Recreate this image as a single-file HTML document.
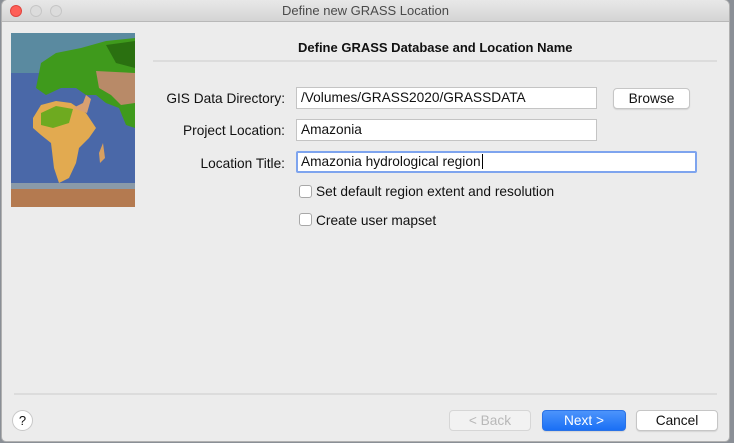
<!DOCTYPE html>
<html><head><style>
*{margin:0;padding:0;box-sizing:border-box}
body{width:734px;height:443px;background:#8a8f96;font-family:"Liberation Sans",sans-serif;font-size:13.7px;color:#111;position:relative;overflow:hidden}
.win{position:absolute;left:2px;top:0;width:727px;height:441px;background:#ececec;border-radius:6px 6px 4px 4px;overflow:hidden;box-shadow:0 0 0 1px #b0b0b0}
.title{position:absolute;left:0;top:0;width:100%;height:22px;background:linear-gradient(#e8e8e8,#d4d4d4);border-bottom:1px solid #b8b8b8;text-align:center;line-height:22px;color:#4a4a4a;font-size:13px}
.dot{position:absolute;top:5px;width:12px;height:12px;border-radius:50%}
.a{position:absolute}
.lbl{position:absolute;text-align:right;width:200px}
.inp{position:absolute;background:#fff;border:1px solid #c4c4c4;height:22px;line-height:20px;padding-left:4px}
.btn{position:absolute;background:#fff;border:1px solid #c6c6c6;border-radius:4px;text-align:center;box-shadow:0 1px 1px rgba(0,0,0,.1)}
.cb{position:absolute;width:13px;height:13px;border:1px solid #a8a8a8;border-radius:3px;background:#fff}
</style></head><body>
<div class="win">
<div class="title">Define new GRASS Location</div>
<div class="dot" style="left:8px;background:#fe5f57;border:1px solid #e0443e"></div>
<div class="dot" style="left:28px;background:#dcdcdc;border:1px solid #c6c6c6"></div>
<div class="dot" style="left:48px;background:#dcdcdc;border:1px solid #c6c6c6"></div>
<svg class="a" style="left:9px;top:33px" width="124" height="174" viewBox="0 0 124 174">
<rect width="124" height="174" fill="#4a68a8"/>
<rect y="0" width="124" height="40" fill="#5a8aa0"/>
<path d="M30 30 L45 20 L70 15 L95 8 L124 5 L124 95 L115 92 L108 75 L95 70 L85 62 L75 62 L65 55 L50 55 L35 62 L25 55 Z" fill="#3f9a1c"/>
<path d="M95 12 L124 8 L124 35 L105 30Z" fill="#2a7010"/>
<path d="M85 38 L124 40 L124 70 L110 72 L100 62 L88 55Z" fill="#b88a68"/>
<path d="M22 85 L30 72 L45 68 L60 70 L75 80 L85 95 L78 105 L68 115 L65 130 L58 145 L48 150 L43 135 L40 110 L30 102 L22 95Z" fill="#e2aa50"/>
<path d="M30 80 L45 73 L62 76 L58 90 L42 95 L30 92Z" fill="#6eaa20"/>
<path d="M62 75 L72 70 L75 62 L80 66 L76 80Z" fill="#d8a070"/>
<path d="M88 120 L92 110 L94 125 L89 130Z" fill="#d8a060"/>
<rect y="155" width="124" height="19" fill="#b47a50"/>
<rect y="150" width="124" height="6" fill="#8a9aa8"/>
</svg>
<div class="a" style="left:296px;top:40px;font-weight:bold;font-size:13px">Define GRASS Database and Location Name</div>
<div class="a" style="left:151px;top:60px;width:564px;height:2px;background:#dcdcdc"></div>
<div class="lbl" style="left:83px;top:91px">GIS Data Directory:</div>
<div class="inp" style="left:294px;top:87px;width:301px">/Volumes/GRASS2020/GRASSDATA</div>
<div class="btn" style="left:611px;top:88px;width:77px;height:21px;line-height:19px">Browse</div>
<div class="lbl" style="left:83px;top:123px">Project Location:</div>
<div class="inp" style="left:294px;top:119px;width:301px">Amazonia</div>
<div class="lbl" style="left:83px;top:156px">Location Title:</div>
<div class="inp" style="left:294px;top:151px;width:401px;border:2px solid #7ea4ee;border-radius:2px;padding-left:3px;line-height:18px">Amazonia hydrological region<span style="border-left:1px solid #000;margin-left:1px"></span></div>
<div class="cb" style="left:297px;top:185px"></div>
<div class="a" style="left:314px;top:184px">Set default region extent and resolution</div>
<div class="cb" style="left:297px;top:213px"></div>
<div class="a" style="left:314px;top:213px">Create user mapset</div>
<div class="a" style="left:12px;top:393px;width:703px;height:2px;background:#dcdcdc"></div>
<div class="a" style="left:10px;top:410px;width:21px;height:21px;border-radius:50%;background:#fff;border:1px solid #c8c8c8;text-align:center;line-height:19px;font-size:13px">?</div>
<div class="btn" style="left:447px;top:410px;width:82px;height:21px;line-height:19px;color:#b8b8b8;background:#f2f2f2;border-color:#d6d6d6;box-shadow:none">&lt; Back</div>
<div class="btn" style="left:540px;top:410px;width:84px;height:21px;line-height:19px;color:#fff;background:linear-gradient(#4c94fb,#1a6ff5);border-color:#2a72e6">Next &gt;</div>
<div class="btn" style="left:634px;top:410px;width:82px;height:21px;line-height:19px">Cancel</div>
</div>
</body></html>
